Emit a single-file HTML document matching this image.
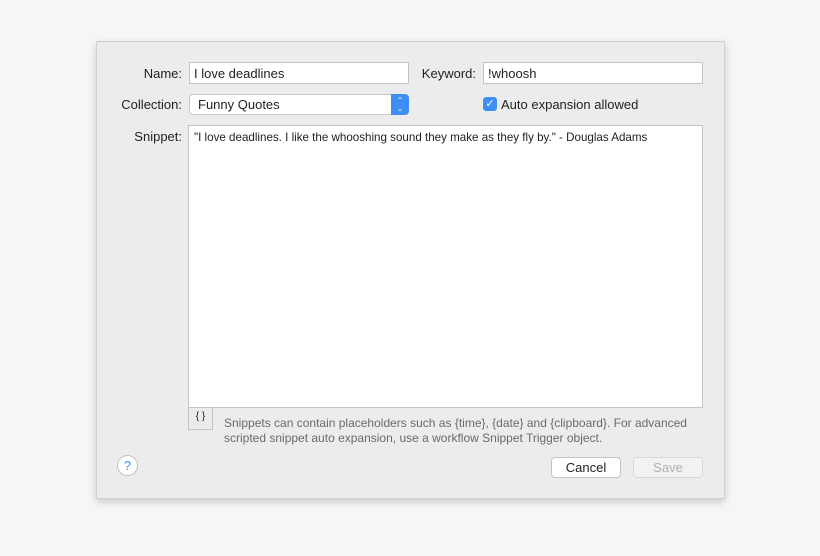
<!DOCTYPE html>
<html><head><style>
body{margin:0;width:820px;height:556px;background:#f6f6f6;font-family:"Liberation Sans",sans-serif;position:relative;overflow:hidden}
.dlg{position:absolute;left:96px;top:41px;width:627px;height:456px;background:#ececec;border:1px solid #d0d0d0;box-shadow:0 3px 8px rgba(0,0,0,.18)}
.a{position:absolute}
.lbl{font-size:13px;color:#222;text-align:right}
.fld{background:#fff;border:1px solid #c4c4c4;box-sizing:border-box;font-size:13px;color:#222;padding:3px 0 0 4px}
</style></head><body>
<div class="dlg"></div>
<div class="a lbl" style="left:100px;top:66px;width:82px">Name:</div>
<div class="a fld" style="left:189px;top:62px;width:220px;height:22px">I love deadlines</div>
<div class="a lbl" style="left:400px;top:66px;width:76px">Keyword:</div>
<div class="a fld" style="left:483px;top:62px;width:220px;height:22px">!whoosh</div>
<div class="a lbl" style="left:100px;top:97px;width:82px">Collection:</div>
<div class="a" style="left:189px;top:94px;width:220px;height:21px;background:#fff;border:1px solid #c8c8c8;border-radius:4px;box-sizing:border-box;font-size:13px;color:#222;padding:2px 0 0 8px">Funny Quotes
<div class="a" style="right:-1px;top:-1px;width:18px;height:21px;background:#3d8ef7;border-radius:0 4px 4px 0;color:#fff;font-size:8px;line-height:8px;text-align:center;padding-top:3px;box-sizing:border-box">&#8963;<br>&#8964;</div></div>
<div class="a" style="left:483px;top:97px;width:14px;height:14px;background:#3d8ef7;border-radius:3px;color:#fff;font-size:11px;line-height:14px;text-align:center">✓</div>
<div class="a" style="left:501px;top:97px;font-size:13px;color:#222">Auto expansion allowed</div>
<div class="a lbl" style="left:100px;top:129px;width:82px">Snippet:</div>
<div class="a fld" style="left:188px;top:125px;width:515px;height:283px;font-size:11.6px;padding:5px 0 0 5px">"I love deadlines. I like the whooshing sound they make as they fly by." - Douglas Adams</div>
<div class="a" style="left:188px;top:407px;width:25px;height:23px;border:1px solid #c4c4c4;border-top:none;box-sizing:border-box;font-size:10px;text-align:center;line-height:20px;color:#222">{ }</div>
<div class="a" style="left:224px;top:416px;font-size:12px;line-height:15px;color:#6a6a6a">Snippets can contain placeholders such as {time}, {date} and {clipboard}. For advanced<br>scripted snippet auto expansion, use a workflow Snippet Trigger object.</div>
<div class="a" style="left:117px;top:455px;width:19px;height:19px;border:1px solid #c0c0c0;border-radius:50%;background:#fff;color:#3d8ef7;font-size:13px;text-align:center;line-height:19px">?</div>
<div class="a" style="left:551px;top:457px;width:70px;height:21px;background:#fff;border:1px solid #c4c4c4;border-radius:4px;box-sizing:border-box;font-size:13px;text-align:center;line-height:19px;color:#222">Cancel</div>
<div class="a" style="left:633px;top:457px;width:70px;height:21px;background:#f2f2f2;border:1px solid #d8d8d8;border-radius:4px;box-sizing:border-box;font-size:13px;text-align:center;line-height:19px;color:#b0b0b0">Save</div>
</body></html>
